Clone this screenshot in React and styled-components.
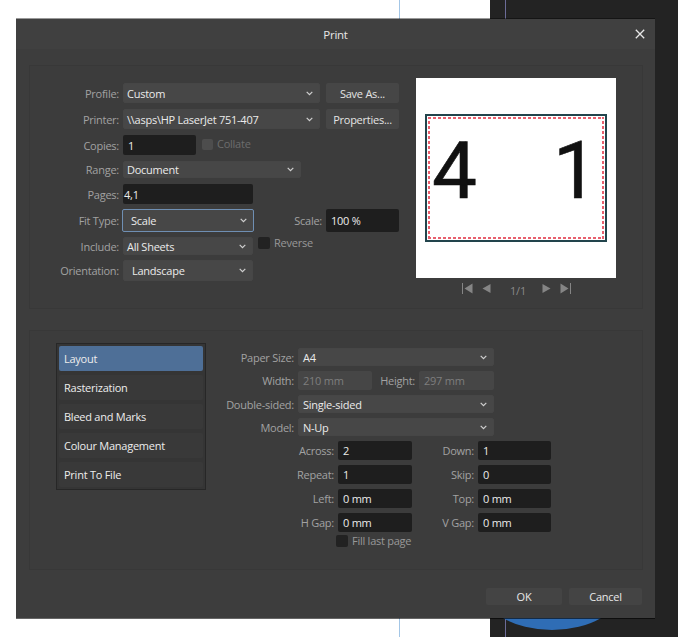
import React from 'react';
import styled, { createGlobalStyle } from 'styled-components';

const GlobalStyle = createGlobalStyle`
  html, body {
    margin: 0;
    padding: 0;
    background: #fff;
    overflow: hidden;
  }
  body {
    font-family: "Open Sans", "Noto Sans", sans-serif;
    font-size: 11px;
    letter-spacing: -0.25px;
  }
`;

const Desktop = styled.div`
  position: relative;
  width: 678px;
  height: 637px;
  overflow: hidden;
  background: #fff;
`;

const DarkSide = styled.div`
  position: absolute;
  left: 490px;
  top: 0;
  width: 188px;
  height: 637px;
  background: #232323;
`;

const Guide = styled.div`
  position: absolute;
  left: ${(p) => p.$x}px;
  top: 0;
  width: 1px;
  height: 637px;
  background: ${(p) => p.$color};
`;

const Circle = styled.div`
  position: absolute;
  left: 482px;
  top: 546px;
  width: 140px;
  height: 84px;
  border-radius: 50%;
  background: #2f6db5;
`;

const Dialog = styled.div`
  position: absolute;
  left: 16px;
  top: 19px;
  width: 639px;
  height: 599px;
  background: #3d3d3d;
  box-shadow: 0 -1px 0 rgba(0, 0, 0, 0.4), 0 1px 0 rgba(0, 0, 0, 0.6);
  display: flex;
  flex-direction: column;
  color: #e2e2e2;
`;

const TitleBar = styled.div`
  height: 30px;
  display: flex;
  align-items: center;
  justify-content: center;
  position: relative;
  background: #404040;
  font-size: 11.5px;
  color: #e6e6e6;
`;

const CloseIcon = styled.svg`
  position: absolute;
  right: 10px;
  top: 10px;
  width: 10px;
  height: 10px;
`;

const Panel = styled.section`
  width: 614px;
  height: ${(p) => p.$h}px;
  box-sizing: border-box;
  margin: ${(p) => p.$top}px 0 0 13px;
  border: 1px solid #383838;
  background: #3c3c3c;
  display: flex;
  align-items: flex-start;
`;

const Form = styled.div`
  display: flex;
  flex-direction: column;
  margin-top: ${(p) => p.$top || 0}px;
`;

const Row = styled.div`
  display: flex;
  align-items: center;
  height: ${(p) => p.$h}px;
  margin-bottom: ${(p) => p.$gap}px;
`;

const Label = styled.span`
  width: ${(p) => p.$w}px;
  flex: none;
  text-align: right;
  margin-right: 4px;
  white-space: nowrap;
  color: #a2a2a2;
`;

const SelectBox = styled.div`
  width: ${(p) => p.$w}px;
  height: 100%;
  flex: none;
  box-sizing: border-box;
  display: flex;
  align-items: center;
  justify-content: space-between;
  padding: 0 6px 0 ${(p) => p.$indent || 3}px;
  margin-left: ${(p) => (p.$focus ? -1 : 0)}px;
  background: #474747;
  border-radius: 2px;
  border: 1px solid ${(p) => (p.$focus ? '#6f8fb3' : '#464646')};
  color: #ebebeb;
  white-space: nowrap;
`;

const Field = styled.div`
  width: ${(p) => p.$w}px;
  height: 100%;
  flex: none;
  box-sizing: border-box;
  display: flex;
  align-items: center;
  padding-left: ${(p) => p.$indent || 5}px;
  border-radius: 2px;
  background: ${(p) => (p.$off ? '#464646' : '#1e1e1e')};
  color: ${(p) => (p.$off ? '#7e7e7e' : '#ececec')};
`;

const SideButton = styled.div`
  width: 73px;
  height: 100%;
  margin-left: 6px;
  flex: none;
  display: flex;
  align-items: center;
  justify-content: center;
  background: #464646;
  border-radius: 2px;
  color: #e4e4e4;
  white-space: nowrap;
`;

const CheckWrap = styled.label`
  display: flex;
  align-items: center;
  align-self: flex-start;
  line-height: 12px;
  margin-left: ${(p) => p.$left}px;
  margin-top: ${(p) => p.$top || 0}px;
  color: ${(p) => (p.$off ? '#6c6c6c' : '#989898')};
  white-space: nowrap;
`;

const CheckBox = styled.span`
  width: ${(p) => p.$size}px;
  height: ${(p) => p.$size}px;
  margin-right: 4px;
  flex: none;
  border-radius: 2px;
  background: ${(p) => (p.$off ? '#4d4d4d' : '#222')};
`;

const PreviewColumn = styled.div`
  width: 200px;
  margin: 12px 0 0 17px;
  flex: none;
`;

const PreviewSheet = styled.div`
  width: 200px;
  height: 200px;
  box-sizing: border-box;
  padding: 36px 9px 0;
  background: #fff;
`;

const PrintedPage = styled.div`
  height: 128px;
  box-sizing: border-box;
  border: 2px solid #22444c;
  padding: 1px;
`;

// short dashes, a CSS dashed border comes out too long at this size
const Bleed = styled.div`
  height: 100%;
  box-sizing: border-box;
  background:
    repeating-linear-gradient(90deg, #e8606e 0 3px, transparent 3px 5px) top / 100% 2px no-repeat,
    repeating-linear-gradient(90deg, #e8606e 0 3px, transparent 3px 5px) bottom / 100% 2px no-repeat,
    repeating-linear-gradient(0deg, #e8606e 0 3px, transparent 3px 5px) left / 2px 100% no-repeat,
    repeating-linear-gradient(0deg, #e8606e 0 3px, transparent 3px 5px) right / 2px 100% no-repeat;
  display: flex;
  justify-content: space-between;
  padding: 14px 6px 0 4px;
  font-family: Roboto, Arial, sans-serif;
  font-size: 80px;
  line-height: 80px;
  letter-spacing: 0;
  color: #111;
  -webkit-text-stroke: 0.6px #111;
`;

const Pager = styled.div`
  height: 18px;
  margin-top: 1px;
  display: flex;
  align-items: center;
  justify-content: center;
  color: #8a8a8a;
`;

const PagerText = styled.span`
  width: 41px;
  box-sizing: border-box;
  text-align: center;
  padding: 4px 0 0 4px;
  font-size: 11px;
`;

const PagerIcon = styled.svg`
  width: 11px;
  height: 11px;
  margin: 0 4px;
  fill: #858585;
`;

const List = styled.ul`
  width: 150px;
  height: 147px;
  box-sizing: border-box;
  flex: none;
  list-style: none;
  margin: 12px 10px 0 26px;
  padding: 2px 2px 0;
  background: #353535;
  border: 1px solid #272727;
`;

const ListItem = styled.li`
  height: 25px;
  margin-bottom: 4px;
  padding-left: 5px;
  display: flex;
  align-items: center;
  border-radius: 2px;
  color: #ededed;
  background: ${(p) => (p.$active ? '#4e6f97' : '#393939')};
`;

const Footer = styled.div`
  display: flex;
  justify-content: flex-end;
  margin: 18px 13px 0 0;
  gap: 7px;
`;

const FooterButton = styled.div`
  width: ${(p) => p.$w}px;
  height: 17px;
  display: flex;
  align-items: center;
  justify-content: center;
  background: #444;
  border-radius: 2px;
  color: #e8e8e8;
`;

const Chevron = () => (
  <svg width="7" height="5" viewBox="0 0 7 5" fill="none" stroke="#d0d0d0" strokeWidth="1.2">
    <path d="M0.7 0.8 L3.5 3.6 L6.3 0.8" />
  </svg>
);

const Select = ({ w, indent, focus, children }) => (
  <SelectBox $w={w} $indent={indent} $focus={focus}>
    <span>{children}</span>
    <Chevron />
  </SelectBox>
);

const App = () => (
  <Desktop>
    <GlobalStyle />
    <DarkSide />
    <Guide $x={399} $color="#a3c6e6" />
    <Guide $x={505} $color="#6c6c98" />
    <Circle />
    <Dialog>
      <TitleBar>
        Print
        <CloseIcon viewBox="0 0 10 10" fill="none" stroke="#e8e8e8" strokeWidth="1.3">
          <path d="M0.8 0.8 L9.2 9.2 M9.2 0.8 L0.8 9.2" />
        </CloseIcon>
      </TitleBar>

      <Panel $h={244} $top={16}>
        <Form $top={17}>
          <Row $h={20} $gap={6}>
            <Label $w={89}>Profile:</Label>
            <Select w={197}>Custom</Select>
            <SideButton>Save As...</SideButton>
          </Row>
          <Row $h={20} $gap={6}>
            <Label $w={89}>Printer:</Label>
            <Select w={197}>\\asps\HP LaserJet 751-407</Select>
            <SideButton>Properties...</SideButton>
          </Row>
          <Row $h={20} $gap={6}>
            <Label $w={89}>Copies:</Label>
            <Field $w={73}>1</Field>
            <CheckWrap $left={6} $top={3} $off>
              <CheckBox $size={11} $off />
              Collate
            </CheckWrap>
          </Row>
          <Row $h={17} $gap={6}>
            <Label $w={89}>Range:</Label>
            <Select w={178}>Document</Select>
          </Row>
          <Row $h={20} $gap={5}>
            <Label $w={89}>Pages:</Label>
            <Field $w={130} $indent={1}>4,1</Field>
          </Row>
          <Row $h={23} $gap={5}>
            <Label $w={89}>Fit Type:</Label>
            <Select w={132} indent={8} focus>Scale</Select>
            <Label $w={68}>Scale:</Label>
            <Field $w={73}>100 %</Field>
          </Row>
          <Row $h={18} $gap={5}>
            <Label $w={89}>Include:</Label>
            <Select w={130}>All Sheets</Select>
            <CheckWrap $left={5}>
              <CheckBox $size={12} />
              Reverse
            </CheckWrap>
          </Row>
          <Row $h={21} $gap={0}>
            <Label $w={89}>Orientation:</Label>
            <Select w={130} indent={8}>Landscape</Select>
          </Row>
        </Form>

        <PreviewColumn>
          <PreviewSheet>
            <PrintedPage>
              <Bleed>
                <span>4</span>
                <span>1</span>
              </Bleed>
            </PrintedPage>
          </PreviewSheet>
          <Pager>
            <PagerIcon viewBox="0 0 11 11">
              <path d="M0 0 H1 V11 H0 Z M10.5 0.5 V10.5 L2.5 5.5 Z" />
            </PagerIcon>
            <PagerIcon viewBox="0 0 11 11">
              <path d="M9.5 1 V10 L1.5 5.5 Z" />
            </PagerIcon>
            <PagerText>1/1</PagerText>
            <PagerIcon viewBox="0 0 11 11">
              <path d="M1.5 1 V10 L9.5 5.5 Z" />
            </PagerIcon>
            <PagerIcon viewBox="0 0 11 11">
              <path d="M10 0 H11 V11 H10 Z M0.5 0.5 V10.5 L8.5 5.5 Z" />
            </PagerIcon>
          </Pager>
        </PreviewColumn>
      </Panel>

      <Panel $h={240} $top={21}>
        <List>
          <ListItem $active>Layout</ListItem>
          <ListItem>Rasterization</ListItem>
          <ListItem>Bleed and Marks</ListItem>
          <ListItem>Colour Management</ListItem>
          <ListItem>Print To File</ListItem>
        </List>
        <Form $top={17}>
          <Row $h={18} $gap={5}>
            <Label $w={78}>Paper Size:</Label>
            <Select w={196} indent={4}>A4</Select>
          </Row>
          <Row $h={19} $gap={5}>
            <Label $w={78}>Width:</Label>
            <Field $w={74} $off>210 mm</Field>
            <Label $w={43}>Height:</Label>
            <Field $w={75} $off>297 mm</Field>
          </Row>
          <Row $h={18} $gap={5}>
            <Label $w={78}>Double-sided:</Label>
            <Select w={196} indent={4}>Single-sided</Select>
          </Row>
          <Row $h={18} $gap={5}>
            <Label $w={78}>Model:</Label>
            <Select w={196} indent={4}>N-Up</Select>
          </Row>
          <Row $h={19} $gap={5}>
            <Label $w={118}>Across:</Label>
            <Field $w={74}>2</Field>
            <Label $w={62}>Down:</Label>
            <Field $w={73}>1</Field>
          </Row>
          <Row $h={19} $gap={5}>
            <Label $w={118}>Repeat:</Label>
            <Field $w={74}>1</Field>
            <Label $w={62}>Skip:</Label>
            <Field $w={73}>0</Field>
          </Row>
          <Row $h={19} $gap={5}>
            <Label $w={118}>Left:</Label>
            <Field $w={74}>0 mm</Field>
            <Label $w={62}>Top:</Label>
            <Field $w={73}>0 mm</Field>
          </Row>
          <Row $h={19} $gap={3}>
            <Label $w={118}>H Gap:</Label>
            <Field $w={74}>0 mm</Field>
            <Label $w={62}>V Gap:</Label>
            <Field $w={73}>0 mm</Field>
          </Row>
          <CheckWrap $left={120}>
            <CheckBox $size={12} />
            Fill last page
          </CheckWrap>
        </Form>
      </Panel>

      <Footer>
        <FooterButton $w={76}>OK</FooterButton>
        <FooterButton $w={73}>Cancel</FooterButton>
      </Footer>
    </Dialog>
  </Desktop>
);

export default App;
